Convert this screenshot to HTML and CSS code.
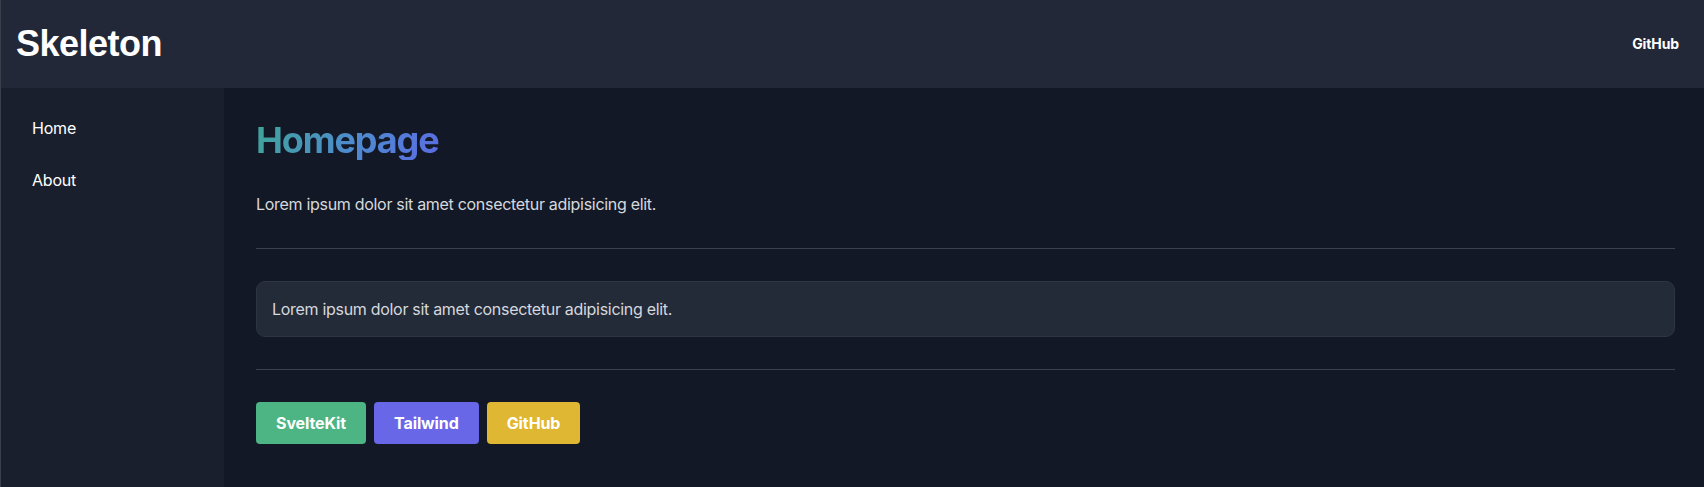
FILE: index.html
```html
<!DOCTYPE html>
<html lang="en">
<head>
<meta charset="utf-8">
<title>Skeleton</title>
<link rel="stylesheet" href="styles.css">
</head>
<body>
<div class="app">
  <header class="topbar">
    <strong class="logo">Skeleton</strong>
    <a class="top-link" href="#">GitHub</a>
  </header>
  <div class="body">
    <nav class="sidebar">
      <a class="nav-link" href="#">Home</a>
      <a class="nav-link" href="#">About</a>
    </nav>
    <main class="main">
      <h1 class="title">Homepage</h1>
      <p class="text">Lorem ipsum dolor sit amet consectetur adipisicing elit.</p>
      <hr class="divider">
      <div class="card">Lorem ipsum dolor sit amet consectetur adipisicing elit.</div>
      <hr class="divider">
      <div class="buttons">
        <a class="btn btn-green" href="#">SvelteKit</a>
        <a class="btn btn-indigo" href="#">Tailwind</a>
        <a class="btn btn-yellow" href="#">GitHub</a>
      </div>
    </main>
  </div>
</div>
</body>
</html>
```

FILE: styles.css
```css
* { box-sizing: border-box; }
html, body { margin: 0; padding: 0; height: 100%; }
body {
  background: #131826;
  color: #ffffff;
  font-family: Inter, "Helvetica Neue", Arial, sans-serif;
  font-size: 16px;
  line-height: 24px;
  overflow: hidden;
}
a { color: inherit; text-decoration: none; }

.app {
  display: flex;
  flex-direction: column;
  height: 100vh;
  border-left: 1px solid #3a3f4b;
}

.topbar {
  flex: 0 0 88px;
  height: 88px;
  background: #222837;
  display: flex;
  align-items: center;
  justify-content: space-between;
  padding: 0 25px 0 15px;
}
.logo {
  font-family: "Liberation Sans", Arial, sans-serif;
  font-size: 36px;
  font-weight: 700;
  line-height: 40px;
  letter-spacing: -0.5px;
}
.top-link {
  font-size: 14px;
  font-weight: 700;
  line-height: 20px;
  letter-spacing: -0.1px;
}

.body {
  flex: 1;
  display: flex;
  min-height: 0;
}
.sidebar {
  flex: 0 0 223px;
  background: #1a1f2d;
  padding: 16px 16px 16px 15px;
  display: flex;
  flex-direction: column;
  gap: 4px;
}
.nav-link {
  padding: 12px 16px;
  font-size: 16px;
  line-height: 24px;
  color: #ffffff;
  letter-spacing: -0.2px;
}

.main {
  flex: 1;
  padding: 32px 29px 32px 32px;
  display: flex;
  flex-direction: column;
  gap: 32px;
}
.title {
  margin: 0;
  font-size: 36px;
  line-height: 40px;
  font-weight: 700;
  align-self: flex-start;
  background: linear-gradient(120deg, #3fa597 0%, #4f8ad0 55%, #5b6be3 100%);
  -webkit-background-clip: text;
  background-clip: text;
  color: transparent;
  letter-spacing: -1.1px;
}
.text {
  margin: 0;
  color: #d6d8dd;
  letter-spacing: -0.3px;
}
.divider {
  margin: 0;
  border: 0;
  border-top: 1px solid #3a4150;
  height: 0;
}
.card {
  background: #232a38;
  border: 1px solid #2d3442;
  border-radius: 9px;
  padding: 15px 15px;
  color: #d6d8dd;
  letter-spacing: -0.3px;
}
.buttons {
  display: flex;
  gap: 8px;
}
.btn {
  display: inline-block;
  padding: 8.75px 20px;
  border-radius: 4px;
  font-weight: 700;
  font-size: 16px;
  line-height: 24px;
  color: #ffffff;
  letter-spacing: -0.1px;
}
.btn-green { background: #4db583; }
.btn-indigo { background: #6767e8; }
.btn-yellow { background: #e0b732; }
```
